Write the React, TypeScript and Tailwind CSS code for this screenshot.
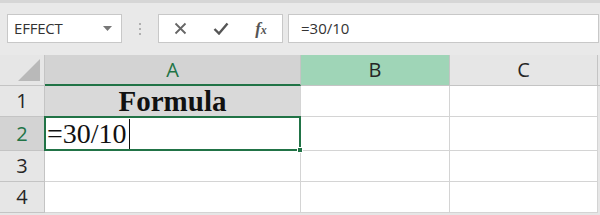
import React from "react";

const ui = { fontFamily: '"Open Sans", "Noto Sans", sans-serif' };
const serif = { fontFamily: '"Liberation Serif", "DejaVu Serif", serif' };

export default function App() {
  return (
    <div className="w-[600px] h-[215px] bg-[#e6e6e6] overflow-hidden" style={ui}>
      {/* toolbar */}
      <div className="h-[55px] border-t-[3px] border-[#d6d6d6] bg-[#e9e9e9] flex items-start pt-[11px] pl-[7px]">
        <div className="w-[115px] h-[29px] bg-white border border-[#c8c8c8] flex items-center pl-[6px] pr-[9px]">
          <span className="text-[15px] text-[#333] tracking-[-0.2px] flex-1">EFFECT</span>
          <svg width="9" height="5" viewBox="0 0 9 5"><path d="M0 0h9L4.5 5z" fill="#777" /></svg>
        </div>
        <div className="w-[36px] h-[29px] flex flex-col items-center justify-center gap-[3px]">
          <div className="w-[2px] h-[2px] bg-[#b0b0b0]" />
          <div className="w-[2px] h-[2px] bg-[#b0b0b0]" />
          <div className="w-[2px] h-[2px] bg-[#b0b0b0]" />
        </div>
        <div className="w-[125px] h-[29px] bg-white border border-[#c8c8c8] flex items-center">
          <div className="w-[42px] flex justify-center">
            <svg width="13" height="13" viewBox="0 0 13 13"><path d="M1.5 1.5l10 10M11.5 1.5l-10 10" stroke="#666" strokeWidth="1.8" /></svg>
          </div>
          <div className="w-[40px] flex justify-center">
            <svg width="16" height="13" viewBox="0 0 16 13"><path d="M1.5 7l4.5 4.5L14.5 1.5" stroke="#555" strokeWidth="2.4" fill="none" /></svg>
          </div>
          <div className="w-[40px] flex justify-center">
            <span className="italic font-bold text-[17px] text-[#555]" style={serif}>f<span className="text-[12px]">x</span></span>
          </div>
        </div>
        <div className="w-[5px]" />
        <div className="w-[311px] h-[29px] bg-white border border-[#c8c8c8] flex items-center pl-[12px]">
          <span className="text-[15px] text-[#333]">=30/10</span>
        </div>
      </div>

      {/* grid */}
      <div className="grid grid-cols-[45px_256px_149px_148px_2px] grid-rows-[31px_31px_34px_31px_31px] bg-white">
        {/* header row */}
        <div className="bg-[#e6e6e6] border-r border-b border-[#c4c4c4] relative">
          <svg className="absolute right-[4px] bottom-[4px]" width="22" height="22" viewBox="0 0 22 22"><path d="M22 0V22H0z" fill="#b9b9b9" /></svg>
        </div>
        <div className="bg-[#d3d3d3] border-r border-[#c4c4c4] border-b-2 border-b-[#217346] flex items-center justify-center text-[20px] text-[#217346]">A</div>
        <div className="bg-[#9fd5b7] border-r border-b border-[#c4c4c4] flex items-center justify-center text-[20px] text-[#262626]">B</div>
        <div className="bg-[#e6e6e6] border-r border-b border-[#c4c4c4] flex items-center justify-center text-[20px] text-[#262626]">C</div>
        <div className="bg-[#e6e6e6] border-b border-[#c4c4c4]" />

        {/* row 1 */}
        <div className="bg-[#e6e6e6] border-r border-b border-[#c4c4c4] flex items-center justify-center text-[20px] text-[#262626]">1</div>
        <div className="bg-[#d9d9d9] border-r border-b border-[#d4d4d4] flex items-center justify-center">
          <span className="font-bold text-[29px] leading-none text-[#111]" style={serif}>Formula</span>
        </div>
        <div className="border-r border-b border-[#d4d4d4]" />
        <div className="border-r border-b border-[#d4d4d4]" />
        <div className="bg-[#e6e6e6]" />

        {/* row 2 */}
        <div className="bg-[#d3d3d3] border-r border-b border-[#c4c4c4] flex items-center justify-center text-[20px] text-[#217346]">2</div>
        <div className="relative border-2 border-[#217346] flex items-center -mt-px -ml-px">
          <span className="text-[28px] leading-none text-[#111] pl-[1px]" style={serif}>=30/10</span>
          <span className="w-[1px] h-[30px] bg-[#111] ml-[2px]" />
          <div className="absolute right-[-4px] bottom-[-4px] w-[6px] h-[6px] bg-[#217346] border border-white" />
        </div>
        <div className="border-r border-b border-[#d4d4d4]" />
        <div className="border-r border-b border-[#d4d4d4]" />
        <div className="bg-[#e6e6e6]" />

        {/* row 3 */}
        <div className="bg-[#e6e6e6] border-r border-b border-[#c4c4c4] flex items-center justify-center text-[20px] text-[#262626]">3</div>
        <div className="border-r border-b border-[#d4d4d4]" />
        <div className="border-r border-b border-[#d4d4d4]" />
        <div className="border-r border-b border-[#d4d4d4]" />
        <div className="bg-[#e6e6e6]" />

        {/* row 4 */}
        <div className="bg-[#e6e6e6] border-r border-b border-[#c4c4c4] flex items-center justify-center text-[20px] text-[#262626]">4</div>
        <div className="border-r border-b border-[#d4d4d4]" />
        <div className="border-r border-b border-[#d4d4d4]" />
        <div className="border-r border-b border-[#d4d4d4]" />
        <div className="bg-[#e6e6e6]" />
      </div>
    </div>
  );
}
